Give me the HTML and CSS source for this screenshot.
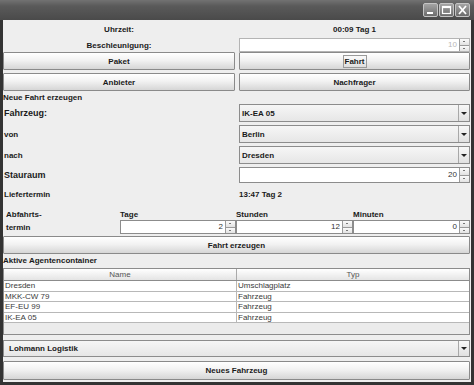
FILE: index.html
```html
<!DOCTYPE html>
<html>
<head>
  <title>Agentenplattform</title>
  <link rel="stylesheet" href="styles.css">
</head>
<body>

<div class="window">
  <div class="titlebar">
    <span class="tbtn"><svg width="13" height="12" viewBox="0 0 13 12"><rect x="3" y="8" width="6" height="2" fill="#fff"/></svg></span>
    <span class="tbtn"><svg width="13" height="12" viewBox="0 0 13 12"><rect x="2.5" y="2.5" width="8" height="7" fill="none" stroke="#fff" stroke-width="1.2"/><rect x="2.5" y="2.5" width="8" height="1.6" fill="#fff"/></svg></span>
    <span class="tbtn"><svg width="13" height="12" viewBox="0 0 13 12"><path d="M3 2 L10 10 M10 2 L3 10" stroke="#fff" stroke-width="1.8"/></svg></span>
  </div>

  <div class="content">
    <div class="cols clock-row">
      <span class="center">Uhrzeit:</span>
      <span class="center">00:09 Tag 1</span>
    </div>

    <div class="cols accel-row">
      <span class="center">Beschleunigung:</span>
      <div class="spinner disabled">
        <span class="value">10</span>
        <span class="spin"><i class="up"></i><i class="down"></i></span>
      </div>
    </div>

    <div class="cols button-grid">
      <button>Paket</button>
      <button><span class="focus">Fahrt</span></button>
      <button>Anbieter</button>
      <button>Nachfrager</button>
    </div>

    <div class="section">Neue Fahrt erzeugen</div>

    <div class="cols form-row">
      <label class="big">Fahrzeug:</label>
      <div class="combo"><span>IK-EA 05</span><span class="arrow"></span></div>
    </div>
    <div class="cols form-row">
      <label>von</label>
      <div class="combo"><span>Berlin</span><span class="arrow"></span></div>
    </div>
    <div class="cols form-row">
      <label>nach</label>
      <div class="combo"><span>Dresden</span><span class="arrow"></span></div>
    </div>
    <div class="cols form-row short">
      <label class="big">Stauraum</label>
      <div class="spinner">
        <span class="value">20</span>
        <span class="spin"><i class="up"></i><i class="down"></i></span>
      </div>
    </div>

    <div class="cols info-row">
      <label>Liefertermin</label>
      <span>13:47 Tag 2</span>
    </div>

    <div class="departure">
      <span class="dep-label">Abfahrts-</span>
      <span class="unit">Tage</span>
      <span class="unit">Stunden</span>
      <span class="unit">Minuten</span>
      <span class="dep-label">termin</span>
      <div class="spinner"><span class="value">2</span><span class="spin"><i class="up"></i><i class="down"></i></span></div>
      <div class="spinner"><span class="value">12</span><span class="spin"><i class="up"></i><i class="down"></i></span></div>
      <div class="spinner"><span class="value">0</span><span class="spin"><i class="up"></i><i class="down"></i></span></div>
    </div>

    <button class="wide">Fahrt erzeugen</button>

    <div class="section containers">Aktive Agentencontainer</div>

    <div class="table-box">
      <table>
        <thead>
          <tr><th>Name</th><th>Typ</th></tr>
        </thead>
        <tbody>
          <tr><td>Dresden</td><td>Umschlagplatz</td></tr>
          <tr><td>MKK-CW 79</td><td>Fahrzeug</td></tr>
          <tr><td>EF-EU 99</td><td>Fahrzeug</td></tr>
          <tr><td>IK-EA 05</td><td>Fahrzeug</td></tr>
        </tbody>
      </table>
    </div>

    <div class="combo company"><span>Lohmann Logistik</span><span class="arrow"></span></div>

    <button class="wide last">Neues Fahrzeug</button>
  </div>
</div>

</body>
</html>
```

FILE: styles.css
```css
body {
  margin: 0;
  padding: 0;
  background: #ffffff;
  font-family: 'Liberation Sans', Arial, sans-serif;
  font-size: 8px;
  font-weight: 700;
  color: #1a1a1a;
}
.window {
  width: 474px;
  height: 385px;
  box-sizing: border-box;
  background: #333333;
  padding: 0 3px 3px 3px;
  display: flex;
  flex-direction: column;
}
.titlebar {
  height: 20px;
  margin: 0 -3px;
  padding-right: 4px;
  background: linear-gradient(#727272, #5a5a5a 30%, #4a4a4a);
  display: flex;
  justify-content: flex-end;
  align-items: center;
  gap: 1px;
}
.tbtn {
  width: 13px;
  height: 12px;
  border: 1px solid #c4c4c4;
  border-radius: 2px;
  background: linear-gradient(#a4a4a4, #6c6c6c);
  display: flex;
}
.content {
  flex: 1;
  background: #eeeeee;
  display: flex;
  flex-direction: column;
}
.cols {
  display: grid;
  grid-template-columns: 232px 231px;
  column-gap: 4px;
  align-items: center;
}
.center {
  text-align: center;
}
.clock-row {
  height: 18px;
}
.accel-row {
  height: 14px;
}

/* spinner */
.spinner {
  height: 14px;
  box-sizing: border-box;
  background: #ffffff;
  border: 1px solid #8c8c8c;
  display: flex;
  align-items: stretch;
  font-weight: 400;
  color: #333;
}
.spinner .value {
  flex: 1;
  text-align: right;
  padding-right: 2px;
  line-height: 12px;
}
.spinner.disabled {
  border-color: #b4b4b4;
}
.spinner.disabled .value {
  color: #b8b8b8;
}
.spin {
  width: 9px;
  display: flex;
  flex-direction: column;
  border-left: 1px solid #9a9a9a;
}
.spin i {
  flex: 1;
  background: linear-gradient(#fbfbfb, #e2e2e2);
  position: relative;
}
.spin i.up {
  border-bottom: 1px solid #9a9a9a;
}
.spin i::after {
  content: "";
  position: absolute;
  left: 3px;
  width: 2px;
  height: 1px;
  background: #777;
  top: 2px;
}

/* buttons */
button {
  font-family: inherit;
  font-size: 8px;
  font-weight: 700;
  color: #1a1a1a;
  height: 18px;
  padding: 0;
  margin: 0;
  border: 1px solid #8a8a8a;
  border-radius: 1px;
  background: linear-gradient(#ffffff, #f2f2f2 45%, #d6d6d6);
}
.button-grid {
  row-gap: 3px;
}
.focus {
  border: 1px solid #9a9a9a;
  padding: 1px 1px;
}
.section {
  height: 13px;
  line-height: 13px;
  padding-left: 0;
}

/* form rows */
.form-row {
  height: 18px;
  margin-bottom: 3px;
}
.form-row.short {
  height: 16px;
}
.form-row .spinner {
  height: 16px;
}
.form-row .spinner .value {
  line-height: 14px;
}
.form-row label {
  padding-left: 1px;
}
label.big {
  font-size: 9px;
}
.combo {
  height: 18px;
  box-sizing: border-box;
  border: 1px solid #8c8c8c;
  background: linear-gradient(#f6f6f6, #e6e6e6);
  display: flex;
  align-items: center;
}
.combo span:first-child {
  flex: 1;
  padding-left: 2px;
}
.combo .arrow {
  width: 10px;
  height: 100%;
  border-left: 1px solid #a8a8a8;
  background: linear-gradient(#f8f8f8, #e0e0e0);
  display: flex;
  align-items: center;
  justify-content: center;
}
.combo .arrow::after {
  content: "";
  border-left: 3px solid transparent;
  border-right: 3px solid transparent;
  border-top: 3px solid #222;
}
.info-row {
  height: 17px;
}
.info-row label {
  padding-left: 1px;
}

/* departure time */
.departure {
  display: grid;
  grid-template-columns: 117px 116px 117px 117px;
  grid-template-rows: 17px 14px;
  align-items: end;
}
.departure .dep-label {
  padding-left: 3px;
  align-self: center;
}
.departure .dep-label:first-child {
  align-self: end;
  padding-bottom: 1px;
}
.departure .unit {
  padding-bottom: 1px;
}
.wide {
  width: 467px;
  margin-top: 2px;
}

/* table */
.containers {
  height: 14px;
  line-height: 14px;
}
.table-box {
  width: 467px;
  height: 67px;
  box-sizing: border-box;
  border: 1px solid #8c8c8c;
  background: #ebebeb;
  margin-bottom: 5px;
}
table {
  width: 100%;
  border-collapse: collapse;
  font-weight: 400;
  color: #3a3a3a;
}
th {
  height: 11px;
  padding: 0;
  font-weight: 400;
  color: #555;
  border-bottom: 1px solid #8c8c8c;
  border-right: 1px solid #aaaaaa;
  background: linear-gradient(#ffffff, #e4e4e4);
  text-align: center;
  width: 50%;
}
td {
  height: 9.5px;
  line-height: 9px;
  padding: 0 0 0 1px;
  background: #ffffff;
  border-bottom: 1px solid #b8b8b8;
  border-right: 1px solid #b8b8b8;
}
th:last-child, td:last-child {
  border-right: none;
}
.company {
  width: 467px;
  height: 17px;
}
.company span:first-child {
  padding-left: 5px;
}
.last {
  height: 19px;
  margin-top: 4px;
}
```
